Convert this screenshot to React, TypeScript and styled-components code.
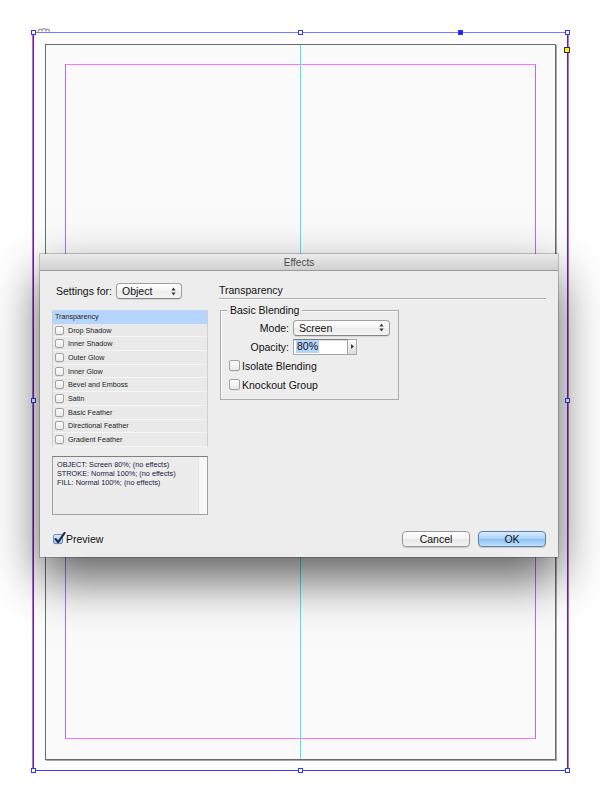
import React from "react";
import styled, { createGlobalStyle } from "styled-components";

const GlobalStyle = createGlobalStyle`
  html, body { margin: 0; padding: 0; background: #ffffff; }
  body { font-family: "Liberation Sans", Arial, sans-serif; }
  *, *::before, *::after { box-sizing: border-box; }
`;

const Canvas = styled.div`
  position: relative;
  width: 600px;
  height: 807px;
  padding: 32px 0 0 33px;
  background: #ffffff;
  overflow: hidden;
`;

const SelectionFrame = styled.div`
  width: 535px;
  height: 739px;
  border: 1px solid #7a7aff;
  border-left-color: #2e2eff;
  border-right-color: #2e2eff;
  border-bottom-color: #3a3aff;
  box-shadow: -1px 0 0 #f2626f, 1px 0 0 #f2626f;
  padding: 11px 11px 10px 11px;
  background: #fdfdfd;
`;

const Page = styled.div`
  position: relative;
  display: flex;
  width: 100%;
  height: 100%;
  border: 1px solid #6c6c6c;
  box-shadow: 1px 1px 0 #a6a6a6;
  background: #fafafa;
  padding: 19px 19px 20px 19px;
`;

const MarginGuides = styled.div`
  flex: 1;
  border-top: 1px solid #ff74ff;
  border-bottom: 1px solid #ff74ff;
  border-left: 1px solid #b06cff;
  border-right: 1px solid #b06cff;
`;

const RulerGuide = styled.div`
  position: absolute;
  top: 0;
  bottom: 0;
  left: 254px;
  width: 1px;
  background: #40ecf0;
`;

const Handle = styled.span<{ $x: number; $y: number; $filled?: boolean }>`
  position: absolute;
  left: ${(p) => p.$x - 2}px;
  top: ${(p) => p.$y - 2}px;
  width: 5px;
  height: 5px;
  border: 1px solid #3434ff;
  background: ${(p) => (p.$filled ? "#1c1cff" : "#ffffff")};
`;

const OutPort = styled.span`
  position: absolute;
  left: 564px;
  top: 47px;
  width: 6px;
  height: 6px;
  border: 1px solid #2a2a60;
  background: #fff200;
`;

const LinkMark = styled.svg`
  position: absolute;
  left: 37px;
  top: 27px;
`;

/* ---------- Dialog ---------- */

const Dialog = styled.div`
  position: absolute;
  left: 40px;
  top: 254px;
  width: 518px;
  height: 303px;
  display: flex;
  flex-direction: column;
  background: #ededed;
  box-shadow: 0 0 0 1px rgba(0, 0, 0, 0.2), 0 22px 46px rgba(0, 0, 0, 0.62);
  font-family: "Liberation Sans", Arial, sans-serif;
  color: #111111;
`;

const TitleBar = styled.div`
  flex: none;
  height: 17px;
  display: flex;
  align-items: center;
  justify-content: center;
  background: linear-gradient(#ebebeb, #d0d0d0);
  border-bottom: 1px solid #9a9a9a;
  font-size: 10px;
  color: #4a4a4a;
`;

const DialogBody = styled.div`
  flex: 1;
  display: flex;
  flex-direction: column;
  justify-content: space-between;
  padding: 12px 12px 10px 12px;
`;

const Columns = styled.div`
  display: grid;
  grid-template-columns: 156px 1fr;
  column-gap: 11px;
`;

const LeftColumn = styled.div`
  display: flex;
  flex-direction: column;
`;

const SettingsRow = styled.div`
  height: 16px;
  display: flex;
  align-items: center;
  gap: 4px;
  padding-left: 4px;
  margin-bottom: 11px;
  font-size: 10.5px;
`;

const SelectBox = styled.div<{ $w: number }>`
  width: ${(p) => p.$w}px;
  height: 16px;
  display: flex;
  align-items: center;
  justify-content: space-between;
  padding: 0 5px 0 5px;
  border: 1px solid #a0a0a0;
  border-bottom-color: #878787;
  border-radius: 4px;
  background: linear-gradient(#ffffff, #f4f4f4 50%, #ebebeb 51%, #f6f6f6);
  box-shadow: 0 1px 1px rgba(0, 0, 0, 0.1);
  font-size: 10.5px;
  color: #111;
`;

const EffectList = styled.div`
  display: flex;
  flex-direction: column;
  border-left: 1px solid #cfcfcf;
  border-right: 1px solid #cfcfcf;
  margin-bottom: 9px;
`;

const ListRow = styled.div<{ $selected?: boolean }>`
  height: 13.7px;
  display: flex;
  align-items: center;
  gap: 4px;
  padding-left: 2px;
  background: ${(p) => (p.$selected ? "#b6d5fc" : "#e9e9e9")};
  border-bottom: 1px solid ${(p) => (p.$selected ? "#b6d5fc" : "#f5f5f5")};
  font-size: 7.2px;
  color: #222;
  white-space: nowrap;
`;

const Check = styled.span<{ $size: number }>`
  position: relative;
  flex: none;
  width: ${(p) => p.$size}px;
  height: ${(p) => p.$size}px;
  border: 1px solid #a2a2a2;
  border-radius: 2px;
  background: linear-gradient(#fefefe, #e9e9e9);
  box-shadow: 0 0.5px 0.5px rgba(0, 0, 0, 0.08);
`;

const CheckedBox = styled(Check)`
  border-color: #6f8db4;
  background: linear-gradient(#dbe8f6, #a8c6e8);
`;

const CheckMark = styled.svg`
  position: absolute;
  left: 0px;
  top: -3px;
`;

const SummaryBox = styled.div`
  position: relative;
  height: 59px;
  padding: 3px 12px 0 4px;
  border: 1px solid #a0a0a0;
  border-top-color: #7f7f7f;
  background: #ececec;
  font-size: 7.3px;
  line-height: 9px;
  color: #1a1a40;
  white-space: nowrap;
`;

const ScrollTrack = styled.span`
  position: absolute;
  top: 0;
  right: 0;
  bottom: 0;
  width: 9px;
  background: #f7f7f7;
  border-left: 1px solid #e2e2e2;
`;

const RightColumn = styled.div`
  display: flex;
  flex-direction: column;
`;

const SectionHeader = styled.div`
  height: 16px;
  line-height: 15px;
  border-bottom: 1px solid #a9a9a9;
  box-shadow: 0 1px 0 #f9f9f9;
  font-size: 10.5px;
`;

const GroupBox = styled.div`
  position: relative;
  width: 179px;
  margin: 11px 0 0 1px;
  padding: 7px 0 5px 0;
  border: 1px solid #acacac;
  box-shadow: inset 1px 1px 0 #f8f8f8;
`;

const Legend = styled.span`
  position: absolute;
  top: -7px;
  left: 6px;
  padding: 0 3px;
  background: #ededed;
  font-size: 10.5px;
  line-height: 12px;
`;

const FormRow = styled.div`
  height: 19px;
  display: flex;
  align-items: center;
  gap: 4px;
  font-size: 10.5px;
`;

const FieldLabel = styled.span`
  width: 68px;
  text-align: right;
`;

const NumberField = styled.div`
  width: 55px;
  height: 16px;
  display: flex;
  align-items: center;
  padding-left: 2px;
  background: #ffffff;
  border: 1px solid #a8a8a8;
  border-top-color: #7c7c7c;
  box-shadow: inset 0 1px 1px rgba(0, 0, 0, 0.12);
`;

const SelectedText = styled.span`
  background: #b5d5fd;
  padding: 0 1px;
  line-height: 13px;
  font-size: 10.5px;
`;

const Stepper = styled.div`
  width: 9px;
  height: 16px;
  margin-left: -4px;
  display: flex;
  align-items: center;
  justify-content: center;
  border: 1px solid #a8a8a8;
  border-left: none;
  background: linear-gradient(#fbfbfb, #dcdcdc);
`;

const CheckRow = styled.label`
  height: 19px;
  display: flex;
  align-items: center;
  gap: 2px;
  padding-left: 8px;
  font-size: 10.5px;
`;

const Footer = styled.div`
  height: 16px;
  display: flex;
  align-items: center;
  justify-content: space-between;
`;

const PreviewToggle = styled.label`
  display: flex;
  align-items: center;
  gap: 3px;
  padding-left: 1px;
  font-size: 10.5px;
`;

const ButtonRow = styled.div`
  display: flex;
  gap: 8px;
`;

const PushButton = styled.button<{ $default?: boolean }>`
  width: 68px;
  height: 16px;
  padding: 0;
  border-radius: 4px;
  border: 1px solid ${(p) => (p.$default ? "#5f80ad" : "#979797")};
  background: ${(p) =>
    p.$default
      ? "linear-gradient(#d6e9fb, #aad1f7 50%, #8cc1f3 51%, #bfe0fc)"
      : "linear-gradient(#ffffff, #f3f3f3 50%, #e6e6e6 51%, #f5f5f5)"};
  box-shadow: 0 1px 1px rgba(0, 0, 0, 0.14);
  font-family: "Liberation Sans", Arial, sans-serif;
  font-size: 10.5px;
  color: #111;
  line-height: 14px;
`;

const UpDownArrows = () => (
  <svg width="5" height="9" viewBox="0 0 5 9">
    <path d="M2.5 0.6 L4.6 3.4 H0.4 Z M2.5 8.4 L4.6 5.6 H0.4 Z" fill="#3c3c3c" />
  </svg>
);

const effects = [
  "Drop Shadow",
  "Inner Shadow",
  "Outer Glow",
  "Inner Glow",
  "Bevel and Emboss",
  "Satin",
  "Basic Feather",
  "Directional Feather",
  "Gradient Feather",
];

const handles: Array<[number, number]> = [
  [33, 32],
  [300, 32],
  [567, 32],
  [33, 400],
  [567, 400],
  [33, 770],
  [300, 770],
  [567, 770],
];

export default function App() {
  return (
    <>
      <GlobalStyle />
      <Canvas>
        <SelectionFrame>
          <Page>
            <MarginGuides />
            <RulerGuide />
          </Page>
        </SelectionFrame>

        <LinkMark width="13" height="6" viewBox="0 0 13 6">
          <path
            d="M1 4.5 C2 1.5 4 1.5 5 3.5 C6 1 8 1 9 3.5 C10 1.5 12 1.8 12.5 4.5"
            stroke="#9a9a9a"
            strokeWidth="1.4"
            fill="none"
          />
        </LinkMark>
        {handles.map(([x, y]) => (
          <Handle key={`${x}-${y}`} $x={x} $y={y} />
        ))}
        <Handle $x={460} $y={32} $filled />
        <OutPort />

        <Dialog>
          <TitleBar>Effects</TitleBar>
          <DialogBody>
            <Columns>
              <LeftColumn>
                <SettingsRow>
                  <span>Settings for:</span>
                  <SelectBox $w={66}>
                    <span>Object</span>
                    <UpDownArrows />
                  </SelectBox>
                </SettingsRow>
                <EffectList>
                  <ListRow $selected>Transparency</ListRow>
                  {effects.map((e) => (
                    <ListRow key={e}>
                      <Check $size={9} />
                      <span>{e}</span>
                    </ListRow>
                  ))}
                </EffectList>
                <SummaryBox>
                  <div>OBJECT: Screen 80%; (no effects)</div>
                  <div>STROKE: Normal 100%; (no effects)</div>
                  <div>FILL: Normal 100%; (no effects)</div>
                  <ScrollTrack />
                </SummaryBox>
              </LeftColumn>

              <RightColumn>
                <SectionHeader>Transparency</SectionHeader>
                <GroupBox>
                  <Legend>Basic Blending</Legend>
                  <FormRow>
                    <FieldLabel>Mode:</FieldLabel>
                    <SelectBox $w={97}>
                      <span>Screen</span>
                      <UpDownArrows />
                    </SelectBox>
                  </FormRow>
                  <FormRow>
                    <FieldLabel>Opacity:</FieldLabel>
                    <NumberField>
                      <SelectedText>80%</SelectedText>
                    </NumberField>
                    <Stepper>
                      <svg width="3" height="5" viewBox="0 0 3 5">
                        <path d="M0 0 L3 2.5 L0 5 Z" fill="#3a3a3a" />
                      </svg>
                    </Stepper>
                  </FormRow>
                  <CheckRow>
                    <Check $size={11} />
                    <span>Isolate Blending</span>
                  </CheckRow>
                  <CheckRow>
                    <Check $size={11} />
                    <span>Knockout Group</span>
                  </CheckRow>
                </GroupBox>
              </RightColumn>
            </Columns>

            <Footer>
              <PreviewToggle>
                <CheckedBox $size={10}>
                  <CheckMark width="12" height="12" viewBox="0 0 12 12">
                    <path
                      d="M1.6 7 L4.2 10.2 L10.6 0.8"
                      stroke="#1b2a52"
                      strokeWidth="2.1"
                      fill="none"
                      strokeLinecap="round"
                      strokeLinejoin="round"
                    />
                  </CheckMark>
                </CheckedBox>
                <span>Preview</span>
              </PreviewToggle>
              <ButtonRow>
                <PushButton>Cancel</PushButton>
                <PushButton $default>OK</PushButton>
              </ButtonRow>
            </Footer>
          </DialogBody>
        </Dialog>
      </Canvas>
    </>
  );
}
